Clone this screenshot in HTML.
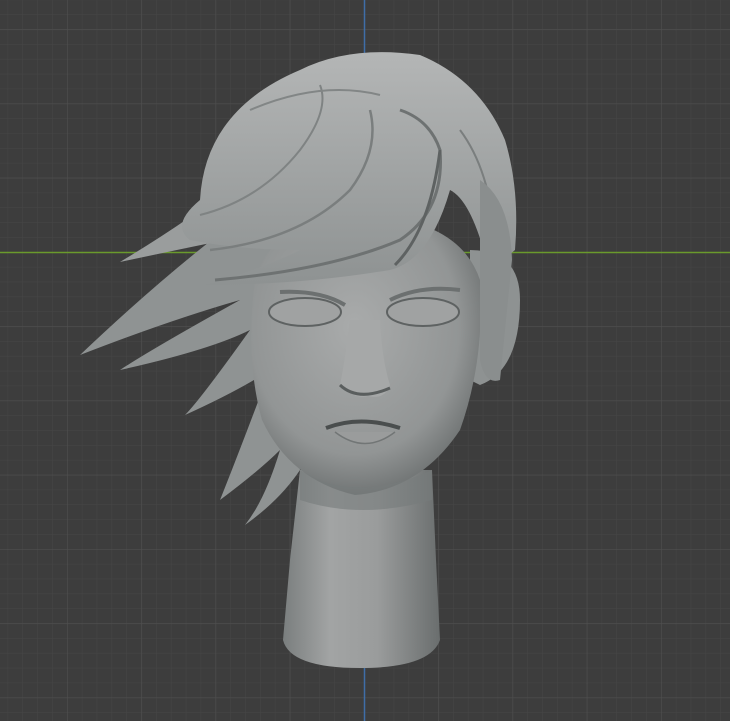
<!DOCTYPE html>
<html><head><style>
html,body{margin:0;padding:0;background:#3d3d3d;width:730px;height:721px;overflow:hidden}
svg{display:block}
</style></head><body>
<svg width="730" height="721" viewBox="0 0 730 721" xmlns="http://www.w3.org/2000/svg">
<defs>
<pattern id="minor" x="364" y="252" width="14.85" height="14.85" patternUnits="userSpaceOnUse">
<path d="M0 0H14.85M0 0V14.85" stroke="#464646" stroke-width="1" fill="none"/>
</pattern>
<pattern id="major" x="364" y="252" width="74.25" height="74.25" patternUnits="userSpaceOnUse">
<path d="M0 0H74.25M0 0V74.25" stroke="#4f4f4f" stroke-width="1.2" fill="none"/>
</pattern>
<radialGradient id="face" cx="0.45" cy="0.4" r="0.65">
<stop offset="0" stop-color="#a9abab"/><stop offset="0.7" stop-color="#929595"/><stop offset="1" stop-color="#666a6a"/>
</radialGradient>
<linearGradient id="neck" x1="0" x2="1">
<stop offset="0" stop-color="#7a7e7e"/><stop offset="0.3" stop-color="#a2a4a4"/><stop offset="0.6" stop-color="#9a9c9c"/><stop offset="1" stop-color="#6a6e6e"/>
</linearGradient>
<linearGradient id="hair" x1="0" y1="0" x2="0" y2="1">
<stop offset="0" stop-color="#b4b6b6"/><stop offset="1" stop-color="#8e9292"/>
</linearGradient>
</defs>
<rect width="730" height="721" fill="#3d3d3d"/>
<rect width="730" height="721" fill="url(#minor)"/>
<rect width="730" height="721" fill="url(#major)"/>
<line x1="0" y1="252.5" x2="730" y2="252.5" stroke="#6a9a2c" stroke-width="1.5"/>
<line x1="364.5" y1="0" x2="364.5" y2="721" stroke="#3f6ea8" stroke-width="1.5"/>

<!-- neck -->
<path d="M300 470 L290 560 L283 640 Q290 668 360 668 Q430 668 440 640 L436 560 L432 470 Z" fill="url(#neck)"/>
<!-- ear -->
<path d="M470 250 Q520 250 520 300 Q520 370 480 385 L470 380 Z" fill="#8e9292"/>
<!-- back hair strands left -->
<path d="M265 200 Q180 260 80 355 Q170 320 240 300 Q150 350 120 370 Q210 350 250 330 Q200 400 185 415 Q240 390 270 370 Q240 450 220 500 Q260 470 280 450 Q265 500 245 525 Q280 500 300 470 Z" fill="#8f9393"/>
<path d="M240 180 Q190 220 120 262 Q200 245 250 235 Z" fill="#9a9d9d"/>
<!-- face -->
<path d="M255 280 Q245 360 262 420 Q290 480 355 495 Q420 490 460 430 Q485 360 480 280 Q460 220 365 215 Q270 220 255 280 Z" fill="url(#face)"/>
<!-- eyes -->
<ellipse cx="305" cy="312" rx="36" ry="14" fill="#a0a2a2" stroke="#5e6262" stroke-width="2"/>
<ellipse cx="423" cy="312" rx="36" ry="14" fill="#a0a2a2" stroke="#5e6262" stroke-width="2"/>
<!-- brows -->
<path d="M280 292 Q320 290 345 305" stroke="#6c7070" stroke-width="4" fill="none"/>
<path d="M390 300 Q420 285 460 290" stroke="#6c7070" stroke-width="4" fill="none"/>
<!-- nose -->
<path d="M350 320 Q345 360 340 385 Q355 400 368 396 Q385 400 390 385 Q382 360 380 320" fill="#a6a8a8"/>
<path d="M340 385 Q358 402 390 388" stroke="#5a5e5e" stroke-width="3" fill="none"/>
<!-- mouth -->
<path d="M326 428 Q360 415 400 428" stroke="#4a4e4e" stroke-width="4" fill="none"/>
<path d="M335 432 Q365 455 395 432" fill="#9a9c9c" stroke="#727676" stroke-width="1.5"/>
<!-- chin shadow -->
<path d="M300 470 Q355 505 432 470 L432 500 Q360 520 300 500 Z" fill="#777b7b" opacity="0.6"/>
<!-- hair top mass -->
<path d="M200 200 Q205 110 300 70 Q350 45 420 55 Q480 80 505 140 Q520 190 515 250 Q505 260 485 255 Q470 200 450 190 Q430 260 390 270 Q300 285 205 285 Q260 270 300 250 Q240 250 190 240 Q170 225 200 200 Z" fill="url(#hair)"/>
<!-- hair strands detail -->
<path d="M215 280 Q330 270 400 240 Q445 210 440 150 Q430 120 400 110" stroke="#6e7272" stroke-width="3" fill="none"/>
<path d="M210 250 Q300 240 350 190 Q380 150 370 110" stroke="#7a7e7e" stroke-width="2.5" fill="none"/>
<path d="M200 215 Q260 200 300 150 Q330 110 320 85" stroke="#7f8383" stroke-width="2" fill="none"/>
<path d="M250 110 Q320 80 380 95" stroke="#828686" stroke-width="2" fill="none"/>
<path d="M460 130 Q490 170 495 240" stroke="#7a7e7e" stroke-width="2" fill="none"/>
<path d="M440 150 Q430 230 395 265" stroke="#5e6262" stroke-width="3" fill="none"/>
<!-- side hair right -->
<path d="M480 180 Q510 200 512 260 L500 380 Q485 385 480 360 Z" fill="#8a8e8e"/>
</svg>
</body></html>
